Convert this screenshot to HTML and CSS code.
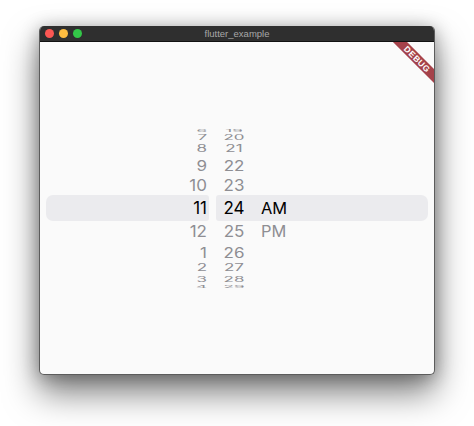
FILE: index.html
```
<!DOCTYPE html>
<html lang="en">
<head>
<meta charset="utf-8">
<title>flutter_example</title>
<link rel="stylesheet" href="styles.css">
</head>
<body>
<div class="window">
  <header class="titlebar">
    <div class="lights">
      <span class="light red"></span>
      <span class="light yellow"></span>
      <span class="light green"></span>
    </div>
    <span class="title">flutter_example</span>
  </header>
  <main class="content">
    <div class="band band-left"></div>
    <div class="band band-right"></div>
    <div class="picker">
      <div class="wheel hours">
        <div class="row r5"><span>6</span></div>
        <div class="row r4"><span>7</span></div>
        <div class="row r3"><span>8</span></div>
        <div class="row r2 nudge-sm"><span>9</span></div>
        <div class="row r1 nudge"><span>10</span></div>
        <div class="row r0"><span>11</span></div>
        <div class="row r1"><span>12</span></div>
        <div class="row r2 nudge-sm"><span>1</span></div>
        <div class="row r3"><span>2</span></div>
        <div class="row r4"><span>3</span></div>
        <div class="row r5"><span>4</span></div>
      </div>
      <div class="wheel minutes">
        <div class="row r5"><span>19</span></div>
        <div class="row r4"><span>20</span></div>
        <div class="row r3"><span>21</span></div>
        <div class="row r2 nudge-sm"><span>22</span></div>
        <div class="row r1 nudge"><span>23</span></div>
        <div class="row r0"><span>24</span></div>
        <div class="row r1"><span>25</span></div>
        <div class="row r2 nudge-sm"><span>26</span></div>
        <div class="row r3"><span>27</span></div>
        <div class="row r4"><span>28</span></div>
        <div class="row r5"><span>29</span></div>
      </div>
      <div class="wheel period">
        <div class="period-top"></div>
        <div class="row r0"><span>AM</span></div>
        <div class="row r1"><span>PM</span></div>
      </div>
    </div>
    <div class="banner">DEBUG</div>
  </main>
</div>
</body>
</html>
```
FILE: styles.css
```
html, body {
  margin: 0;
  padding: 0;
  height: 100%;
  background: #fff;
  overflow: hidden;
}

body {
  padding: 26px 39px 0;
  box-sizing: border-box;
  font-family: Inter, "Liberation Sans", sans-serif;
}

.window {
  width: 396px;
  height: 349px;
  box-sizing: border-box;
  border: 1px solid #5c5c5c;
  border-top: 0;
  border-radius: 5px;
  display: flex;
  flex-direction: column;
  overflow: hidden;
  background: #fafafa;
  box-shadow: 0 18px 34px rgba(0, 0, 0, .5), 0 2px 18px rgba(0, 0, 0, .3);
}

.titlebar {
  height: 16px;
  flex: none;
  margin: 0 -1px;
  background: #2f2f2f;
  border-bottom: 1px solid #111;
  box-sizing: border-box;
  display: flex;
  align-items: center;
  justify-content: center;
  position: relative;
}

.lights {
  position: absolute;
  left: 6px;
  top: 3px;
  display: flex;
  gap: 5px;
}

.light {
  width: 9px;
  height: 9px;
  border-radius: 50%;
}

.red { background: #fc5753; }
.yellow { background: #fdbc40; }
.green { background: #33c748; }

.title {
  font-size: 9.5px;
  line-height: 15px;
  color: #a8a8a8;
  font-family: "Liberation Sans", sans-serif;
}

.content {
  flex: 1;
  position: relative;
  overflow: hidden;
  display: flex;
  align-items: center;
  justify-content: center;
}

.band {
  position: absolute;
  top: 153px;
  height: 26px;
  background: #ebebee;
}

.band-left {
  left: 6px;
  width: 163px;
  border-radius: 7px 3px 3px 7px;
}

.band-right {
  left: 176px;
  width: 212px;
  border-radius: 3px 7px 7px 3px;
}

.picker {
  position: relative;
  height: 160px;
  display: flex;
  width: 100%;
  overflow: hidden;
}

.wheel {
  display: flex;
  flex-direction: column;
  align-items: stretch;
}

.hours {
  width: 167px;
  text-align: right;
  flex: none;
}

.minutes {
  width: 54px;
  text-align: center;
  flex: none;
}

.period {
  text-align: left;
}

.period-top {
  height: 67px;
  flex: none;
}

.row {
  display: flex;
  align-items: center;
  color: #8e8e93;
  font-size: 17px;
  line-height: 1;
  flex: none;
}

.period .row {
  font-size: 16.4px;
}

.row span {
  display: block;
  width: 100%;
}

.r0 { height: 26px; color: #000; }
.r1 { height: 21px; }
.r2 { height: 19px; }
.r3 { height: 13px; }
.r4 { height: 10px; }
.r5 { height: 4px; }

.r1 span { transform: scaleY(.96); }
.r2 span { transform: scaleY(.82); }
.r3 span { transform: scaleY(.6); }
.r4 span { transform: scaleY(.42); }
.r5 span { transform: scaleY(.22); }

.r1.nudge span { transform: translateY(1.5px) scaleY(.96); }
.r2.nudge-sm span { transform: translateY(1.5px) scaleY(.82); }

.banner {
  position: absolute;
  top: 14px;
  right: -30px;
  width: 90px;
  height: 10px;
  background: #a5424a;
  color: #fff;
  font-family: "Liberation Sans", sans-serif;
  font-size: 8.5px;
  font-weight: 900;
  line-height: 10px;
  letter-spacing: .5px;
  text-align: center;
  text-indent: -5px;
  transform: rotate(45deg);
}
```
